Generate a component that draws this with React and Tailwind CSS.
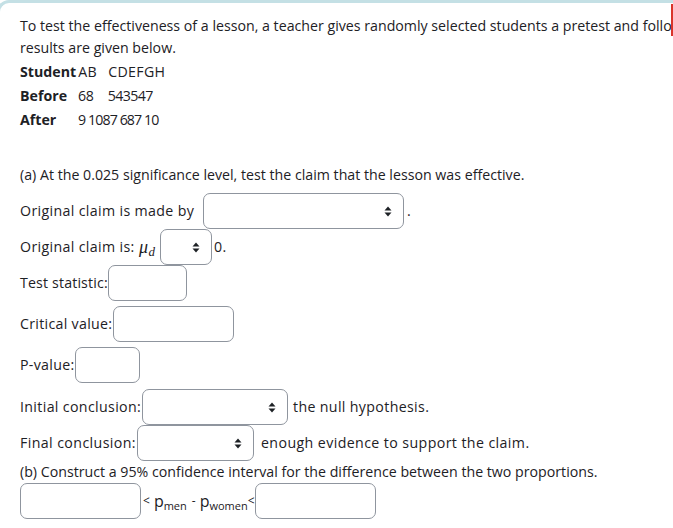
import { useState } from 'react'

const FONT = { fontFamily: '"Open Sans", "Noto Sans", sans-serif' }

function Arrows() {
  return (
    <svg width="8" height="11" viewBox="0 0 8 11" className="shrink-0">
      <path d="M4 0.5 L7.5 4.5 H0.5 Z" fill="#1d2125" />
      <path d="M4 10.5 L7.5 6.5 H0.5 Z" fill="#1d2125" />
    </svg>
  )
}

function Select({ w }) {
  return (
    <div className={`${w} h-[36px] shrink-0 border border-[#8f959e] rounded-[7px] bg-white flex items-center justify-end pr-[11px]`}>
      <Arrows />
    </div>
  )
}

function Input({ w }) {
  return <div className={`${w} h-[36px] shrink-0 border border-[#8f959e] rounded-[7px] bg-white`} />
}

export default function App() {
  const [x] = useState(0)
  return (
    <div className="w-[673px] h-[528px] overflow-hidden bg-white relative text-[14.2px] text-[#1d2125]" style={FONT}>
      <div className="absolute right-0 top-[4px] w-[2px] h-[32px] bg-[#d9342b]" />
      <div className="-ml-[3px] w-[760px] border-t-[3px] border-l-[3px] border-[#c4e0e5] rounded-tl-[12px] pl-[20px] pt-[12px] min-h-[600px]">
        <p className="leading-[22px] whitespace-nowrap">To test the effectiveness of a lesson, a teacher gives randomly selected students a pretest and follow-up test. The</p>
        <p className="leading-[22px]">results are given below.</p>

        <div className="mt-[1px] leading-[24px]">
          <div className="flex">
            <span className="font-bold">Student</span>
            <span className="ml-[2px] tracking-[0.5px]">AB</span>
            <span className="ml-[11px] tracking-[0.3px]">CDEFGH</span>
          </div>
          <div className="flex">
            <span className="w-[58px] font-bold">Before</span>
            <span className="tracking-[-0.3px]">68</span>
            <span className="ml-[14px] tracking-[-0.6px]">543547</span>
          </div>
          <div className="flex">
            <span className="w-[58px] font-bold">After</span>
            <span className="whitespace-pre tracking-[-0.9px]">9 1087 687 10</span>
          </div>
        </div>

        <p className="mt-[32px] leading-[22px]">(a) At the 0.025 significance level, test the claim that the lesson was effective.</p>

        <div className="mt-[7px] flex items-center h-[36px] whitespace-nowrap tracking-[0.35px]">
          <span className="w-[183px] shrink-0">Original claim is made by</span>
          <Select w="w-[201px]" />
          <span className="ml-[3px]">.</span>
        </div>

        <div className="flex items-center h-[36px] whitespace-nowrap tracking-[0.35px]">
          <span className="w-[119px] shrink-0">Original claim is:</span>
          <span className="w-[21px] shrink-0 italic text-[18px] leading-none" style={{ fontFamily: '"Liberation Serif", serif' }}>
            μ<sub className="text-[13px]">d</sub>
          </span>
          <Select w="w-[52px]" />
          <span className="ml-[2px]">0.</span>
        </div>

        <div className="flex items-center h-[36px] whitespace-nowrap tracking-[0.15px]">
          <span className="w-[88px] shrink-0">Test statistic:</span>
          <Input w="w-[79px]" />
        </div>

        <div className="mt-[5px] flex items-center h-[36px] whitespace-nowrap tracking-[0.3px]">
          <span className="w-[93px] shrink-0">Critical value:</span>
          <Input w="w-[121px]" />
        </div>

        <div className="mt-[5px] flex items-center h-[36px] whitespace-nowrap tracking-[0.3px]">
          <span className="w-[55px] shrink-0">P-value:</span>
          <Input w="w-[65px]" />
        </div>

        <div className="mt-[6px] flex items-center h-[36px] whitespace-nowrap tracking-[0.35px]">
          <span className="w-[122px] shrink-0">Initial conclusion:</span>
          <Select w="w-[146px]" />
          <span className="ml-[5px]">the null hypothesis.</span>
        </div>

        <div className="flex items-center h-[36px] whitespace-nowrap tracking-[0.4px]">
          <span className="w-[117px] shrink-0">Final conclusion:</span>
          <Select w="w-[117px]" />
          <span className="ml-[7px]">enough evidence to support the claim.</span>
        </div>

        <p className="leading-[22px]">(b) Construct a 95% confidence interval for the difference between the two proportions.</p>

        <div className="flex items-center h-[36px]">
          <Input w="w-[121px]" />
          <span className="ml-[2px] text-[12px]">&lt;</span>
          <span className="ml-[4px] text-[16px]">p<sub className="text-[11px]">men</sub></span>
          <span className="ml-[5px] text-[12px]">-</span>
          <span className="ml-[4px] text-[16px]">p<sub className="text-[11px]">women</sub></span>
          <span className="text-[12px]">&lt;</span>
          <Input w="w-[121px]" />
        </div>
      </div>
    </div>
  )
}
